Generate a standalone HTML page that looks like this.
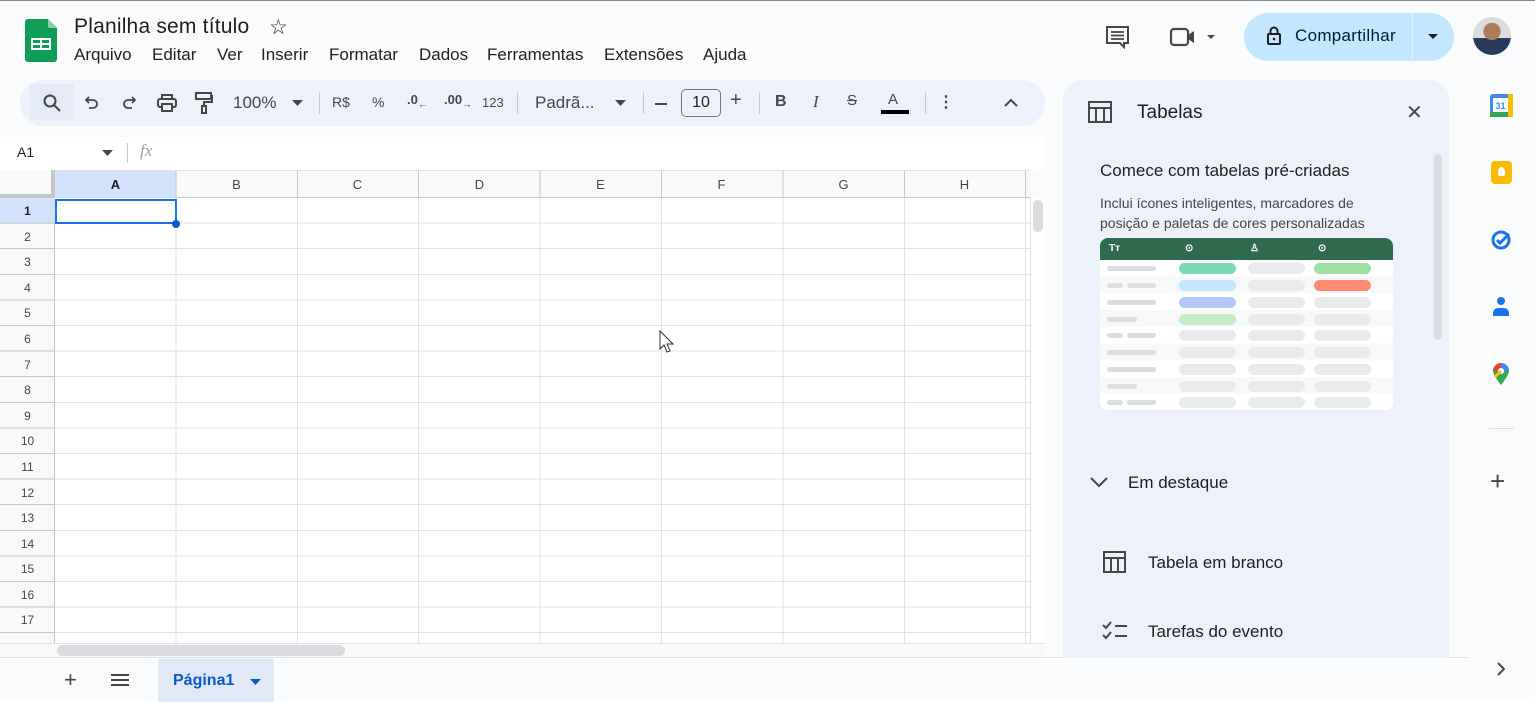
<!DOCTYPE html>
<html><head><meta charset="utf-8"><style>
*{margin:0;padding:0;box-sizing:border-box}
body{width:1535px;height:702px;overflow:hidden;background:#f9fbfd;font-family:"Liberation Sans",Arial,sans-serif;color:#1f1f1f;position:relative}
.a{position:absolute}
.m{position:absolute;top:45px;font-size:17px;color:#1f1f1f;white-space:nowrap}
.tb{position:absolute;top:89px;font-size:15px;color:#444746}
.sep{position:absolute;top:92px;width:1px;height:22px;background:#c7c7c7}
.rn{position:absolute;left:0;width:55px;text-align:center;font-size:12px;color:#444746}
.cn{position:absolute;top:177px;font-size:13px;color:#444746;text-align:center;width:121px}
</style></head><body>
<div class="a" style="left:0;top:0;width:1535px;height:1px;background:#888"></div>
<svg class="a" style="left:25px;top:19px" width="32" height="43" viewBox="0 0 32 43"><path d="M3 0h20l9 9v31a3 3 0 0 1-3 3H3a3 3 0 0 1-3-3V3a3 3 0 0 1 3-3z" fill="#0f9d58"/><path d="M23 0l9 9h-7a2 2 0 0 1-2-2z" fill="#87ceac"/><rect x="6" y="19" width="20" height="12" fill="#fff"/><rect x="8" y="21" width="7" height="3" fill="#0f9d58"/><rect x="17" y="21" width="7" height="3" fill="#0f9d58"/><rect x="8" y="26" width="7" height="3" fill="#0f9d58"/><rect x="17" y="26" width="7" height="3" fill="#0f9d58"/></svg>
<div class="a" style="left:74px;top:15px;font-size:21px;color:#1f1f1f;letter-spacing:0.2px">Planilha sem título</div>
<div class="a" style="left:269px;top:15px;font-size:21px">☆</div>
<div class="m" style="left:74px">Arquivo</div><div class="m" style="left:152px">Editar</div><div class="m" style="left:217px">Ver</div><div class="m" style="left:261px">Inserir</div><div class="m" style="left:329px">Formatar</div><div class="m" style="left:419px">Dados</div><div class="m" style="left:487px">Ferramentas</div><div class="m" style="left:604px">Extensões</div><div class="m" style="left:703px">Ajuda</div>
<svg class="a" style="left:1105px;top:25px" width="26" height="24" viewBox="0 0 26 24"><path d="M2 2h21v16h-4v4l-4-4H2z" fill="none" stroke="#444746" stroke-width="2"/><path d="M6 7h13M6 10.5h13M6 14h13" stroke="#444746" stroke-width="1.8"/></svg>
<svg class="a" style="left:1169px;top:26px" width="48" height="22" viewBox="0 0 48 22"><rect x="2" y="3" width="17" height="16" rx="3" fill="none" stroke="#444746" stroke-width="2.2"/><path d="M19 9l6-4v12l-6-4z" fill="#444746"/><path d="M38 9h8l-4 4z" fill="#444746"/></svg>
<div class="a" style="left:1244px;top:13px;width:210px;height:48px;border-radius:24px;background:#c2e7ff"></div>
<div class="a" style="left:1412px;top:13px;width:1px;height:48px;background:#e6f4ff"></div>
<svg class="a" style="left:1266px;top:26px" width="16" height="20" viewBox="0 0 16 20"><rect x="2" y="8" width="12" height="10" rx="1" fill="none" stroke="#1f1f1f" stroke-width="2"/><path d="M4.5 8V5a3.5 3.5 0 0 1 7 0v3" fill="none" stroke="#1f1f1f" stroke-width="2"/><circle cx="8" cy="13" r="1.3" fill="#1f1f1f"/></svg>
<div class="a" style="left:1295px;top:26px;font-size:17px;color:#001d35;letter-spacing:0.3px">Compartilhar</div>
<svg class="a" style="left:1427px;top:33px" width="12" height="7"><path d="M1 1h10L6 6z" fill="#1f1f1f"/></svg>
<div class="a" style="left:1473px;top:17px;width:38px;height:38px;border-radius:50%;background:radial-gradient(circle at 50% 38%,#b07a5c 0 28%,transparent 29%),linear-gradient(#dcdcdc 0 55%,#2a3a5a 56%);"></div>
<div class="a" style="left:20px;top:80px;width:1025px;height:46px;border-radius:23px;background:#edf2fa"></div>
<div class="a" style="left:30px;top:84px;width:44px;height:36px;background:#e4ebf6"></div>
<svg class="a" style="left:42px;top:93px" width="20" height="20" viewBox="0 0 20 20"><circle cx="8" cy="8" r="5.5" fill="none" stroke="#444746" stroke-width="2"/><path d="M12 12l6 6" stroke="#444746" stroke-width="2"/></svg>
<svg class="a" style="left:84px;top:95px" width="16" height="16" viewBox="0 0 16 16"><path d="M5 2L2 5l3 3M2 5h7a4 4 0 0 1 0 8H5" fill="none" stroke="#444746" stroke-width="1.8"/></svg>
<svg class="a" style="left:121px;top:95px" width="16" height="16" viewBox="0 0 16 16"><path d="M11 2l3 3-3 3M14 5H7a4 4 0 0 0 0 8h4" fill="none" stroke="#444746" stroke-width="1.8"/></svg>
<svg class="a" style="left:157px;top:94px" width="20" height="18" viewBox="0 0 20 18"><rect x="1" y="5" width="18" height="8" rx="2" fill="none" stroke="#444746" stroke-width="2"/><rect x="5" y="1" width="10" height="4" fill="none" stroke="#444746" stroke-width="2"/><rect x="5" y="10" width="10" height="7" fill="#edf2fa" stroke="#444746" stroke-width="2"/></svg>
<svg class="a" style="left:195px;top:92px" width="18" height="22" viewBox="0 0 18 22"><rect x="1" y="1" width="15" height="6" fill="none" stroke="#444746" stroke-width="2"/><path d="M16 4h1v6H9v4" fill="none" stroke="#444746" stroke-width="2"/><rect x="7" y="14" width="4" height="7" fill="none" stroke="#444746" stroke-width="2"/></svg>
<div class="tb" style="left:233px;font-size:17px;top:93px">100%</div>
<svg class="a" style="left:292px;top:100px" width="11" height="6"><path d="M0 0h11L5.5 6z" fill="#444746"/></svg>
<div class="sep" style="left:319px"></div>
<div class="tb" style="left:332px;top:94px;font-size:14px">R$</div>
<div class="tb" style="left:372px;top:94px;font-size:14px">%</div>
<div class="tb" style="left:407px;top:92px;font-size:13px;font-weight:bold">.0<sub style="font-size:10px">←</sub></div>
<div class="tb" style="left:444px;top:92px;font-size:13px;font-weight:bold">.00<sub style="font-size:10px">→</sub></div>
<div class="tb" style="left:482px;top:95px;font-size:13px">123</div>
<div class="sep" style="left:517px"></div>
<div class="tb" style="left:535px;top:93px;font-size:17px">Padrã...</div>
<svg class="a" style="left:615px;top:100px" width="11" height="6"><path d="M0 0h11L5.5 6z" fill="#444746"/></svg>
<div class="sep" style="left:643px"></div>
<div class="a" style="left:655px;top:103px;width:12px;height:2px;background:#444746"></div>
<div class="a" style="left:681px;top:89px;width:40px;height:28px;border:1px solid #747775;border-radius:5px;text-align:center;font-size:16px;line-height:26px;color:#1f1f1f">10</div>
<div class="tb" style="left:730px;top:89px;font-size:20px">+</div>
<div class="sep" style="left:759px"></div>
<div class="tb" style="left:775px;top:93px;font-size:16px;font-weight:bold">B</div>
<div class="tb" style="left:813px;top:92px;font-size:17px;font-style:italic;font-family:'Liberation Serif',serif">I</div>
<div class="tb" style="left:847px;top:92px;font-size:15px;text-decoration:line-through">S</div>
<div class="tb" style="left:888px;top:91px;font-size:15px">A</div>
<div class="a" style="left:881px;top:110px;width:28px;height:4px;background:#000"></div>
<div class="sep" style="left:925px"></div>
<div class="tb" style="left:938px;top:92px;font-weight:bold;font-size:16px">⋮</div>
<svg class="a" style="left:1004px;top:98px" width="14" height="9"><path d="M1 8l6-6 6 6" fill="none" stroke="#444746" stroke-width="2"/></svg>
<div class="a" style="left:0;top:137px;width:1045px;height:33px;background:#fff"></div>
<div class="a" style="left:17px;top:144px;font-size:14px">A1</div>
<svg class="a" style="left:102px;top:150px" width="11" height="6"><path d="M0 0h11L5.5 6z" fill="#444746"/></svg>
<div class="a" style="left:127px;top:143px;width:1px;height:20px;background:#c7c7c7"></div>
<div class="a" style="left:140px;top:141px;font-size:17px;font-style:italic;color:#9aa0a6;font-family:'Liberation Serif',serif">fx</div>
<div class="a" style="left:0;top:170px;width:1030px;height:28px;background:#f8f9fa;border-top:1px solid #e1e3e1;border-bottom:1px solid #c4c7c5"></div>
<div class="a" style="left:0;top:198px;width:55px;height:445px;background:#f8f9fa;border-right:1px solid #c4c7c5"></div>
<div class="a" style="left:0;top:170px;width:55px;height:28px;border-right:4px solid #c4c7c5;border-bottom:4px solid #c4c7c5;background:#f8f9fa"></div>
<div class="a" style="left:55px;top:171px;width:121px;height:27px;background:#d3e3fd"></div>
<div class="a" style="left:0;top:198px;width:55px;height:26px;background:#d3e3fd"></div>
<div class="a" style="left:55px;top:171px;width:975px;height:27px;background:repeating-linear-gradient(90deg,transparent 0 120.4px,#c4c7c5 120.4px 121.4px)"></div>
<div class="a" style="left:55px;top:198px;width:975px;height:445px;background:#fff"></div>
<div class="a" style="left:55px;top:198px;width:975px;height:445px;background:repeating-linear-gradient(90deg,transparent 0 120.4px,#e1e1e1 120.4px 121.4px),repeating-linear-gradient(180deg,transparent 0 24.6px,#e1e1e1 24.6px 25.6px)"></div>
<div class="a" style="left:0;top:198px;width:55px;height:445px;background:repeating-linear-gradient(180deg,transparent 0 24.6px,#c4c7c5 24.6px 25.6px)"></div>
<div class="cn" style="left:55px;font-weight:bold;color:#1f1f1f">A</div><div class="cn" style="left:176px">B</div><div class="cn" style="left:297px">C</div><div class="cn" style="left:419px">D</div><div class="cn" style="left:540px">E</div><div class="cn" style="left:661px">F</div><div class="cn" style="left:783px">G</div><div class="cn" style="left:904px">H</div>
<div class="rn" style="top:204px;font-weight:bold;color:#1f1f1f">1</div>
<div class="rn" style="top:230px">2</div><div class="rn" style="top:255px">3</div><div class="rn" style="top:281px">4</div><div class="rn" style="top:306px">5</div><div class="rn" style="top:332px">6</div><div class="rn" style="top:358px">7</div><div class="rn" style="top:383px">8</div><div class="rn" style="top:409px">9</div><div class="rn" style="top:434px">10</div><div class="rn" style="top:460px">11</div><div class="rn" style="top:486px">12</div><div class="rn" style="top:511px">13</div><div class="rn" style="top:537px">14</div><div class="rn" style="top:562px">15</div><div class="rn" style="top:588px">16</div><div class="rn" style="top:613px">17</div>
<div class="a" style="left:55px;top:199px;width:122px;height:25px;border:2px solid #1a73e8"></div>
<div class="a" style="left:172px;top:220px;width:8px;height:8px;border-radius:50%;background:#0b57d0"></div>
<svg class="a" style="left:659px;top:330px" width="16" height="24" viewBox="0 0 16 24"><path d="M1 1v18l4-4 3 7 3-1-3-7h6z" fill="#fff" stroke="#333" stroke-width="1"/></svg>
<div class="a" style="left:1030px;top:198px;width:15px;height:445px;background:#fff;border-left:1px solid #e1e1e1"></div>
<div class="a" style="left:1033px;top:200px;width:10px;height:32px;border-radius:5px;background:#dadce0"></div>
<div class="a" style="left:0;top:643px;width:1045px;height:14px;background:#f8f9fa;border-top:1px solid #e1e1e1"></div>
<div class="a" style="left:57px;top:645px;width:288px;height:11px;border-radius:6px;background:#dadce0"></div>
<div class="a" style="left:0;top:657px;width:1468px;height:1px;background:#e1e3e1"></div>
<div class="a" style="left:64px;top:667px;font-size:22px;color:#444746">+</div>
<div class="a" style="left:111px;top:674px;width:18px;height:2px;background:#444746;box-shadow:0 5px 0 #444746,0 10px 0 #444746"></div>
<div class="a" style="left:158px;top:659px;width:116px;height:43px;background:#e1e9f7"></div>
<div class="a" style="left:173px;top:672px;font-size:16px;font-weight:bold;color:#0b57d0">Página1</div>
<svg class="a" style="left:250px;top:679px" width="11" height="6"><path d="M0 0h11L5.5 6z" fill="#0b57d0"/></svg>
<div class="a" style="left:1063px;top:80px;width:386px;height:578px;border-radius:18px 18px 0 0;background:#edf2fa"></div>
<svg class="a" style="left:1088px;top:101px" width="24" height="22" viewBox="0 0 24 22"><rect x="1" y="1" width="22" height="20" fill="none" stroke="#444746" stroke-width="2"/><path d="M1 7h22M8 7v14M16 7v14" stroke="#444746" stroke-width="2"/></svg>
<div class="a" style="left:1137px;top:102px;font-size:19px;color:#1f1f1f">Tabelas</div>
<div class="a" style="left:1406px;top:100px;font-size:20px;color:#444746">✕</div>
<div class="a" style="left:1434px;top:154px;width:8px;height:186px;border-radius:4px;background:#dadce0"></div>
<div class="a" style="left:1100px;top:161px;font-size:17px;color:#1f1f1f">Comece com tabelas pré-criadas</div>
<div class="a" style="left:1100px;top:193px;font-size:14px;color:#444746;line-height:20px">Inclui ícones inteligentes, marcadores de<br>posição e paletas de cores personalizadas</div>
<div class="a" style="left:1100px;top:238px;width:293px;height:172px;background:#fff;border-radius:8px;overflow:hidden">
 <div style="height:22px;background:#2e6b4f;color:#fff;font-size:10px;font-weight:bold;padding:5px 9px;position:relative">Tт<span style="position:absolute;left:85px">⊙</span><span style="position:absolute;left:150px">♙</span><span style="position:absolute;left:218px">⊙</span></div>
 <div style="position:relative;height:150px;background:repeating-linear-gradient(180deg,#fff 0 16.7px,#f7f8fa 16.7px 33.4px)">
  <svg width="293" height="150" style="position:absolute;left:0;top:0">
   <g fill="#dcdde0">
    <rect x="7" y="6" width="49" height="5" rx="2.5"/><rect x="7" y="23" width="16" height="5" rx="2.5"/><rect x="27" y="23" width="29" height="5" rx="2.5"/><rect x="7" y="40" width="49" height="5" rx="2.5"/><rect x="7" y="57" width="30" height="5" rx="2.5"/><rect x="7" y="73" width="16" height="5" rx="2.5"/><rect x="27" y="73" width="29" height="5" rx="2.5"/><rect x="7" y="90" width="49" height="5" rx="2.5"/><rect x="7" y="107" width="49" height="5" rx="2.5"/><rect x="7" y="124" width="30" height="5" rx="2.5"/><rect x="7" y="140" width="16" height="5" rx="2.5"/><rect x="27" y="140" width="29" height="5" rx="2.5"/>
   </g>
   <g>
    <rect x="79" y="3" width="57" height="11" rx="5.5" fill="#79dbb8"/><rect x="79" y="20" width="57" height="11" rx="5.5" fill="#c2e7ff"/><rect x="79" y="37" width="57" height="11" rx="5.5" fill="#b5c8fb"/><rect x="79" y="54" width="57" height="11" rx="5.5" fill="#c3ecc9"/>
    <rect x="79" y="70" width="57" height="11" rx="5.5" fill="#e9eaec"/><rect x="79" y="87" width="57" height="11" rx="5.5" fill="#e9eaec"/><rect x="79" y="104" width="57" height="11" rx="5.5" fill="#e9eaec"/><rect x="79" y="121" width="57" height="11" rx="5.5" fill="#e9eaec"/><rect x="79" y="137" width="57" height="11" rx="5.5" fill="#e9eaec"/>
    <g fill="#e9eaec"><rect x="148" y="3" width="57" height="11" rx="5.5"/><rect x="148" y="20" width="57" height="11" rx="5.5"/><rect x="148" y="37" width="57" height="11" rx="5.5"/><rect x="148" y="54" width="57" height="11" rx="5.5"/><rect x="148" y="70" width="57" height="11" rx="5.5"/><rect x="148" y="87" width="57" height="11" rx="5.5"/><rect x="148" y="104" width="57" height="11" rx="5.5"/><rect x="148" y="121" width="57" height="11" rx="5.5"/><rect x="148" y="137" width="57" height="11" rx="5.5"/></g>
    <rect x="214" y="3" width="57" height="11" rx="5.5" fill="#9de09f"/><rect x="214" y="20" width="57" height="11" rx="5.5" fill="#ff8a72"/>
    <g fill="#e9eaec"><rect x="214" y="37" width="57" height="11" rx="5.5"/><rect x="214" y="54" width="57" height="11" rx="5.5"/><rect x="214" y="70" width="57" height="11" rx="5.5"/><rect x="214" y="87" width="57" height="11" rx="5.5"/><rect x="214" y="104" width="57" height="11" rx="5.5"/><rect x="214" y="121" width="57" height="11" rx="5.5"/><rect x="214" y="137" width="57" height="11" rx="5.5"/></g>
   </g>
  </svg>
 </div>
</div>
<svg class="a" style="left:1089px;top:476px" width="20" height="12"><path d="M2 2l8 8 8-8" fill="none" stroke="#444746" stroke-width="2"/></svg>
<div class="a" style="left:1128px;top:473px;font-size:17px;color:#1f1f1f">Em destaque</div>
<svg class="a" style="left:1103px;top:551px" width="23" height="22" viewBox="0 0 23 22"><rect x="1" y="1" width="21" height="20" fill="none" stroke="#444746" stroke-width="2"/><path d="M1 7h21M8 7v14M15 7v14" stroke="#444746" stroke-width="2"/></svg>
<div class="a" style="left:1148px;top:553px;font-size:17px;color:#1f1f1f">Tabela em branco</div>
<svg class="a" style="left:1102px;top:621px" width="26" height="20" viewBox="0 0 26 20"><path d="M1 4l3 3 5-6M1 14l3 3 5-6" fill="none" stroke="#444746" stroke-width="2"/><path d="M13 5h12M13 15h12" stroke="#444746" stroke-width="2"/></svg>
<div class="a" style="left:1148px;top:622px;font-size:17px;color:#1f1f1f">Tarefas do evento</div>
<svg class="a" style="left:1490px;top:94px" width="23" height="23" viewBox="0 0 23 23"><rect x="0" y="0" width="23" height="23" rx="3" fill="#4285f4"/><rect x="0" y="18" width="23" height="5" fill="#34a853"/><rect x="18" y="0" width="5" height="23" fill="#fbbc04"/><rect x="3" y="4" width="15" height="14" fill="#fff"/><text x="10.5" y="15" font-size="9" font-weight="bold" fill="#4285f4" text-anchor="middle" font-family="Liberation Sans">31</text></svg>
<div class="a" style="left:1491px;top:161px;width:21px;height:23px;border-radius:4px;background:#fbbc04"></div>
<div class="a" style="left:1498px;top:167px;width:7px;height:9px;border-radius:50% 50% 2px 2px;background:#fff"></div>
<svg class="a" style="left:1490px;top:229px" width="22" height="22" viewBox="0 0 22 22"><circle cx="11" cy="11" r="8" fill="none" stroke="#1a73e8" stroke-width="3"/><path d="M7 11l3 3 9-9" fill="none" stroke="#1a73e8" stroke-width="3"/></svg>
<svg class="a" style="left:1492px;top:295px" width="18" height="22" viewBox="0 0 18 22"><circle cx="9" cy="6" r="4" fill="#1a73e8"/><path d="M1 21v-3a5 5 0 0 1 5-5h6a5 5 0 0 1 5 5v3z" fill="#1a73e8"/></svg>
<svg class="a" style="left:1492px;top:362px" width="18" height="24" viewBox="0 0 18 24"><path d="M9 23S1 13 1 9a8 8 0 0 1 16 0c0 4-8 14-8 14z" fill="#34a853"/><path d="M1 9a8 8 0 0 1 8-8v8z" fill="#ea4335"/><path d="M17 9a8 8 0 0 0-8-8v8z" fill="#4285f4"/><circle cx="9" cy="9" r="3" fill="#fff"/><path d="M3 15l6-6" stroke="#fbbc04" stroke-width="3"/></svg>
<div class="a" style="left:1489px;top:428px;width:25px;height:1px;background:#dadce0"></div>
<div class="a" style="left:1490px;top:466px;font-size:26px;color:#444746">+</div>
<svg class="a" style="left:1497px;top:662px" width="8" height="14"><path d="M1 1l6 6-6 6" fill="none" stroke="#444746" stroke-width="2"/></svg>
</body></html>
